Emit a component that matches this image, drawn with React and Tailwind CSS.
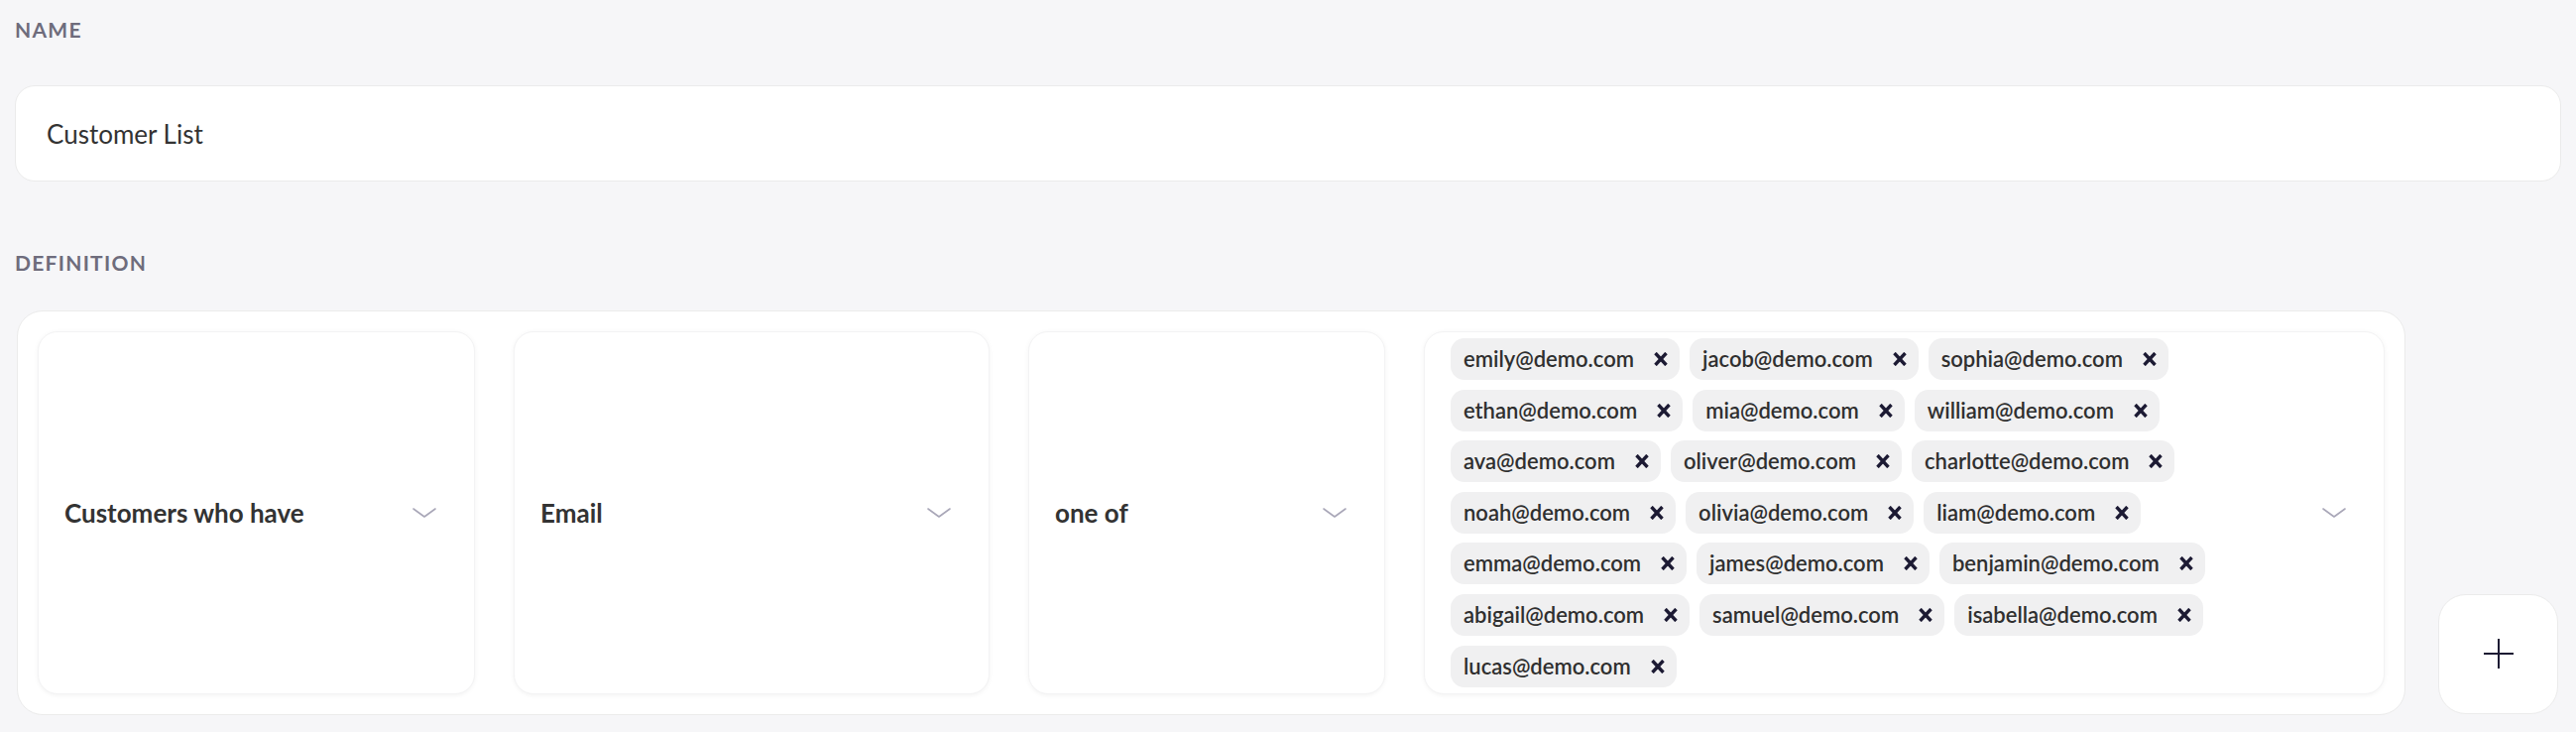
import React from "react";

const emails = [
  "emily@demo.com",
  "jacob@demo.com",
  "sophia@demo.com",
  "ethan@demo.com",
  "mia@demo.com",
  "william@demo.com",
  "ava@demo.com",
  "oliver@demo.com",
  "charlotte@demo.com",
  "noah@demo.com",
  "olivia@demo.com",
  "liam@demo.com",
  "emma@demo.com",
  "james@demo.com",
  "benjamin@demo.com",
  "abigail@demo.com",
  "samuel@demo.com",
  "isabella@demo.com",
  "lucas@demo.com",
];

function Chevron() {
  return (
    <svg width="24" height="10" viewBox="0 0 24 10" fill="none" className="shrink-0">
      <path d="M1 1 L12 9 L23 1" stroke="#a9a7b8" strokeWidth="1.6" strokeLinecap="round" strokeLinejoin="round" />
    </svg>
  );
}

function XIcon() {
  return (
    <svg width="14" height="14" viewBox="0 0 14 14" fill="none" className="shrink-0">
      <path d="M1.5 1 L12.5 13 M12.5 1 L1.5 13" stroke="#1c1a33" strokeWidth="3.4" strokeLinecap="butt" />
    </svg>
  );
}

function SelectCard({ label, className }) {
  return (
    <div
      className={`flex items-center justify-between rounded-[20px] bg-white border border-[#f3f3f4] shadow-[0_1px_5px_rgba(0,0,0,0.05)] pl-[26px] pr-[38px] ${className}`}
    >
      <span className="text-[26px] font-bold text-[#333333] leading-none">{label}</span>
      <Chevron />
    </div>
  );
}

export default function App() {
  return (
    <div
      className="min-h-screen w-full bg-[#f6f6f8] px-[15px] pt-[15px]"
      style={{ fontFamily: "Lato, 'Noto Sans', 'Liberation Sans', sans-serif" }}
    >
      <div className="h-[30px] leading-[30px] text-[21px] font-bold tracking-[0.06em] text-[#6e6c7c]">
        NAME
      </div>
      <div className="mt-[41px] h-[97px] rounded-[20px] bg-white border border-[#ebebeb] flex items-center pl-[31px]">
        <span className="text-[26px] text-[#333333] leading-none">Customer List</span>
      </div>

      <div className="mt-[67px] h-[30px] leading-[30px] text-[21px] font-bold tracking-[0.06em] text-[#6e6c7c]">
        DEFINITION
      </div>

      <div className="mt-[33px] flex items-end gap-[33px]">
        <div className="ml-[2px] flex-1 rounded-[26px] bg-white border border-[#ebebeb] p-[20px]">
          <div className="flex items-stretch gap-[39px]">
            <SelectCard label="Customers who have" className="w-[441px]" />
            <SelectCard label="Email" className="w-[480px]" />
            <SelectCard label="one of" className="w-[360px]" />
            <div className="flex-1 flex items-center rounded-[20px] bg-white border border-[#f3f3f4] shadow-[0_1px_5px_rgba(0,0,0,0.05)] pl-[26px] pr-[38px] py-[6px]">
              <div className="flex-1 flex flex-wrap gap-x-[10px] gap-y-[9.6px] pr-[40px]">
                {emails.map((e) => (
                  <div
                    key={e}
                    className="h-[42px] flex items-center gap-[20px] rounded-[14px] bg-[#f0f0f1] pl-[13px] pr-[12px]"
                  >
                    <span className="text-[22px] font-semibold text-[#2f2f2f] leading-none">{e}</span>
                    <XIcon />
                  </div>
                ))}
              </div>
              <Chevron />
            </div>
          </div>
        </div>
        <div className="mr-[3px] mb-[1px] w-[121px] h-[121px] shrink-0 rounded-[28px] bg-white border border-[#ebebeb] flex items-center justify-center">
          <svg width="30" height="30" viewBox="0 0 30 30" fill="none">
            <path d="M15 0 V30 M0 15 H30" stroke="#1c1a33" strokeWidth="2" />
          </svg>
        </div>
      </div>
    </div>
  );
}
